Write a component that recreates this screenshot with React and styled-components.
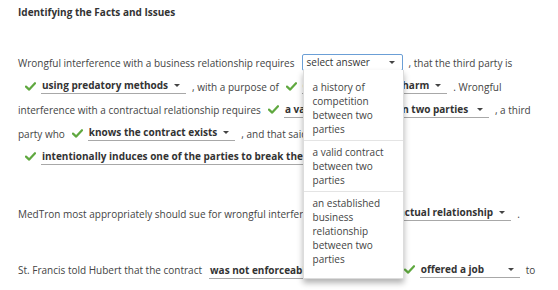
import React from 'react';
import styled, { createGlobalStyle } from 'styled-components';

const GlobalStyle = createGlobalStyle`
  html, body {
    margin: 0;
    padding: 0;
    background: #fff;
    overflow: hidden;
  }
  body {
    font-family: "Open Sans", "Liberation Sans", sans-serif;
    color: #444;
  }
`;

const Page = styled.div`
  width: 558px;
  height: 290px;
  box-sizing: border-box;
  padding: 4px 10px 0 18px;
  overflow: hidden;
`;

const Title = styled.h2`
  margin: 0 0 32px;
  font-size: 10px;
  line-height: 16px;
  font-weight: 700;
  color: #333;
`;

const Paragraph = styled.p`
  margin: 0 0 33px;
  font-size: 10px;
  line-height: 23.5px;
`;

const Answer = styled.span`
  display: inline-flex;
  align-items: center;
  margin: 0 6px 0 7px;
`;

const CheckIcon = styled.svg`
  width: 11px;
  height: 9px;
  margin-right: 5px;
  flex: none;
`;

const Choice = styled.span`
  display: inline-flex;
  align-items: center;
  justify-content: space-between;
  min-width: ${(p) => p.$w}px;
  box-sizing: border-box;
  padding: 0 6px 0 1px;
  line-height: 15px;
  border-bottom: 1px solid #a8a8a8;
  font-weight: 700;
  color: #333;
  white-space: nowrap;
`;

const Caret = styled.span`
  flex: none;
  margin-left: 6px;
  border-left: 3px solid transparent;
  border-right: 3px solid transparent;
  border-top: 3px solid #444;
`;

const OpenSelect = styled.span`
  position: relative;
  display: inline-flex;
  align-items: center;
  justify-content: space-between;
  width: 101px;
  height: 17px;
  box-sizing: border-box;
  margin: 0 6px 0 7px;
  padding: 0 7px 0 4px;
  border: 1px solid #6b9fd6;
  border-radius: 2px;
  color: #333;
  line-height: 15px;
  vertical-align: 1px;
`;

const Menu = styled.ul`
  position: absolute;
  top: 100%;
  left: 0;
  z-index: 2;
  width: 101px;
  box-sizing: border-box;
  margin: 0;
  padding: 6px 0 8px;
  list-style: none;
  background: #fff;
  border: 1px solid #dcdcdc;
  border-top: none;
  box-shadow: 0 4px 6px rgba(0, 0, 0, 0.3);
`;

const Option = styled.li`
  padding: 4px 9px;
  line-height: 14px;
  color: #444;
  white-space: normal;
  & + & {
    border-top: 1px solid #e4e4e4;
  }
`;

const Check = () => (
  <CheckIcon viewBox="0 0 11 9">
    <path d="M1 4.6 L4.2 7.6 L10 1.2" fill="none" stroke="#5fa83f" strokeWidth="2.2" strokeLinecap="round" strokeLinejoin="round" />
  </CheckIcon>
);

const Picked = ({ w, check = true, children }) => (
  <Answer>
    {check && <Check />}
    <Choice $w={w}>
      {children}
      <Caret />
    </Choice>
  </Answer>
);

const options = [
  'a history of competition between two parties',
  'a valid contract between two parties',
  'an established business relationship between two parties',
];

export default function App() {
  return (
    <>
      <GlobalStyle />
      <Page>
        <Title>Identifying the Facts and Issues</Title>
        <Paragraph>
          Wrongful interference with a business relationship requires
          <OpenSelect>
            select answer
            <Caret />
            <Menu>
              {options.map((o) => (
                <Option key={o}>{o}</Option>
              ))}
            </Menu>
          </OpenSelect>
          , that the third party is
          <Picked w={144}>using predatory methods</Picked>
          , with a purpose of
          <Picked w={139}>causing substantial harm</Picked>
          . Wrongful interference with a contractual relationship requires
          <Picked w={205}>a valid contract between two parties</Picked>
          , a third party who
          <Picked w={144}>knows the contract exists</Picked>
          , and that said third party
          <Picked w={330}>intentionally induces one of the parties to break the contract</Picked>
          .
        </Paragraph>
        <Paragraph>
          MedTron most appropriately should sue for wrongful interference with
          <Picked w={138}>contractual relationship</Picked>
          .
        </Paragraph>
        <Paragraph>
          St. Francis told Hubert that the contract
          <Picked w={138} check={false}>was not enforceable</Picked>
          , and was
          <Picked w={100}>offered a job</Picked>
          to Hubert because St. Francis believed the competing offer was more valuable to the hospital.
        </Paragraph>
      </Page>
    </>
  );
}
